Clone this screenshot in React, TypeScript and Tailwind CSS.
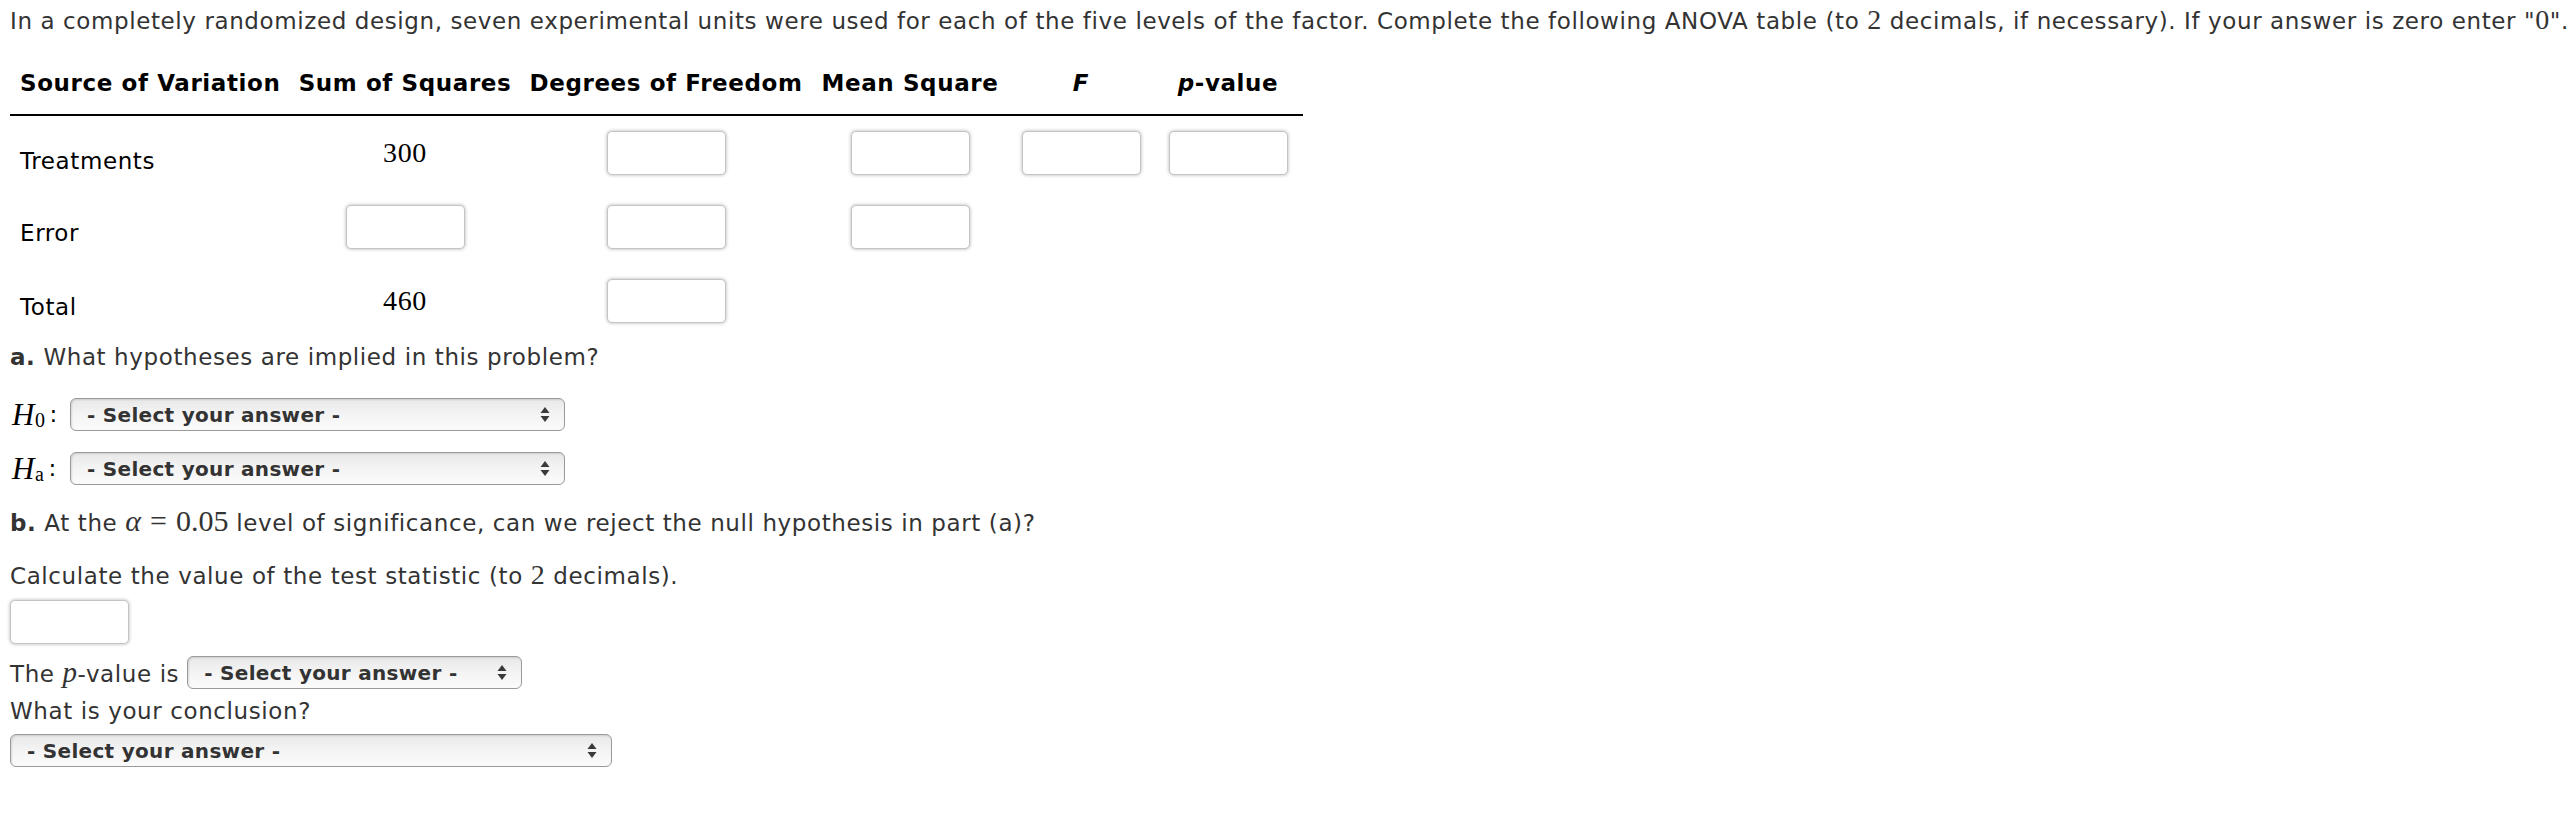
import React from "react";

const serif = "font-['Liberation_Serif',serif]";

function Box({ className = "" }: { className?: string }) {
  return (
    <div
      className={`h-[44px] w-[119px] rounded-[5px] border border-[#c4c4c4] bg-white shadow-[0_0_3px_1px_rgba(0,0,0,0.18)] ${className}`}
    />
  );
}

function Arrows() {
  return (
    <svg width="10" height="17" viewBox="0 0 10 17" className="shrink-0">
      <path d="M5 1 L9.5 7 L0.5 7 Z" fill="#3a3a3a" />
      <path d="M5 16 L9.5 10 L0.5 10 Z" fill="#3a3a3a" />
    </svg>
  );
}

function Select({ width }: { width: string }) {
  return (
    <div
      className={`flex h-[33px] items-center justify-between rounded-[6px] border border-[#9a9a9a] bg-gradient-to-b from-[#e8e8e8] via-[#f4f4f4] to-[#fbfbfb] pl-[16px] pr-[14px] shadow-[inset_1px_1px_2px_rgba(0,0,0,0.12)] ${width}`}
    >
      <span className="text-[20px] font-bold leading-none tracking-[0.3px] text-[#333]">- Select your answer -</span>
      <Arrows />
    </div>
  );
}

function HLabel({ sub }: { sub: string }) {
  return (
    <span className="flex h-[33px] w-[60px] items-center pl-[2px] leading-none text-black">
      <span className={`${serif} text-[31px] italic`}>H</span>
      <span className={`${serif} mt-[10px] text-[20px]`}>{sub}</span>
      <span className="ml-[4px] text-[23px]">:</span>
    </span>
  );
}

const cols = "grid grid-cols-[279px_232px_290px_198px_144px_150px]";

export default function App() {
  return (
    <div className="min-h-[820px] w-[2570px] bg-white px-[10px] pt-[5px] font-['DejaVu_Sans',Verdana,sans-serif] text-[23px] tracking-[0.6px] text-[#333]">
      <p className="h-[30px] whitespace-nowrap leading-[30px]">
        In a completely randomized design, seven experimental units were used for each of the five levels of the factor. Complete the following ANOVA table (to{" "}
        <span className={`${serif} text-[28px]`}>2</span> decimals, if necessary). If your answer is zero enter "
        <span className={`${serif} text-[28px]`}>0</span>".
      </p>

      <div className="w-[1293px]">
        <div className={`${cols} border-b-2 border-black pb-[16px] pt-[33px] text-[23px] font-bold leading-[30px] tracking-[0.6px] text-black`}>
          <div className="whitespace-nowrap pl-[10px]">Source of Variation</div>
          <div className="whitespace-nowrap text-center">Sum of Squares</div>
          <div className="whitespace-nowrap text-center">Degrees of Freedom</div>
          <div className="whitespace-nowrap text-center">Mean Square</div>
          <div className="text-center italic">F</div>
          <div className="text-center">
            <span className="italic">p</span>-value
          </div>
        </div>

        <div className={`${cols} h-[74px] items-center text-black`}>
          <div className="pl-[10px] pt-[16px]">Treatments</div>
          <div className={`text-center ${serif} text-[28px]`}>300</div>
          <div className="flex justify-center"><Box /></div>
          <div className="flex justify-center"><Box /></div>
          <div className="flex justify-center"><Box /></div>
          <div className="flex justify-center"><Box /></div>
        </div>

        <div className={`${cols} h-[74px] items-center text-black`}>
          <div className="pl-[10px] pt-[12px]">Error</div>
          <div className="flex justify-center"><Box /></div>
          <div className="flex justify-center"><Box /></div>
          <div className="flex justify-center"><Box /></div>
          <div />
          <div />
        </div>

        <div className={`${cols} h-[74px] items-center text-black`}>
          <div className="pl-[10px] pt-[12px]">Total</div>
          <div className={`text-center ${serif} text-[28px]`}>460</div>
          <div className="flex justify-center"><Box /></div>
          <div />
          <div />
          <div />
        </div>
      </div>

      <p className="mt-[4px] h-[30px] leading-[30px]">
        <span className="font-bold">a.</span> What hypotheses are implied in this problem?
      </p>

      <div className="mt-[26px] flex h-[33px] items-center">
        <HLabel sub="0" />
        <Select width="w-[495px]" />
      </div>

      <div className="mt-[21px] flex h-[33px] items-center">
        <HLabel sub="a" />
        <Select width="w-[495px]" />
      </div>

      <p className="mt-[21px] h-[30px] whitespace-nowrap leading-[30px]">
        <span className="font-bold">b.</span> At the{" "}
        <span className={`${serif} text-[30px] italic tracking-normal`}>α</span>
        <span className={`${serif} mx-[9px] text-[30px] tracking-normal`}>=</span>
        <span className={`${serif} text-[30px] tracking-normal`}>0.05</span> level of significance, can we reject the null hypothesis in part (a)?
      </p>

      <p className="mt-[24px] h-[30px] leading-[30px]">
        Calculate the value of the test statistic (to <span className={`${serif} text-[28px]`}>2</span> decimals).
      </p>

      <Box className="mt-[10px]" />

      <div className="mt-[12px] flex h-[33px] items-center">
        <span className="mr-[8px] leading-[30px]">
          The <span className={`${serif} text-[29px] italic`}>p</span>-value is
        </span>
        <Select width="w-[335px]" />
      </div>

      <p className="mt-[7px] h-[30px] leading-[30px]">What is your conclusion?</p>

      <div className="mt-[8px]">
        <Select width="w-[602px]" />
      </div>
    </div>
  );
}
